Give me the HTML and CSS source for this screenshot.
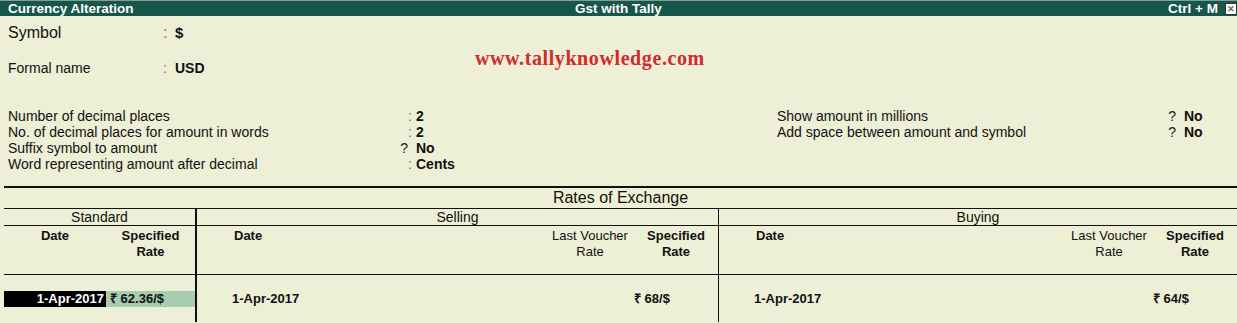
FILE: index.html
```html
<!DOCTYPE html>
<html lang="en">
<head>
  <meta charset="UTF-8" />
  <title>Currency Alteration</title>
  <link rel="stylesheet" href="styles.css">
</head>
<body>
  <!-- Title bar -->
  <div class="titlebar">
    <div class="title-left">Currency Alteration</div>
    <div class="title-center">Gst with Tally</div>
    <div class="title-right">
      <span>Ctrl + M</span>
      <span class="close-btn">&#x2715;</span>
    </div>
  </div>

  <!-- Currency details -->
  <div class="form">
    <div class="field field-big">
      <div class="field-label">Symbol</div>
      <div class="field-mark">:</div>
      <div class="field-value">$</div>
    </div>
    <div class="watermark-row">
      <div class="field">
        <div class="field-label">Formal name</div>
        <div class="field-mark">:</div>
        <div class="field-value">USD</div>
      </div>
      <div class="watermark">www.tallyknowledge.com</div>
    </div>

    <div class="options">
      <div class="options-col">
        <div class="opt">
          <div class="opt-label">Number of decimal places</div>
          <div class="opt-mark">:</div>
          <div class="opt-value">2</div>
        </div>
        <div class="opt">
          <div class="opt-label">No. of decimal places for amount in words</div>
          <div class="opt-mark">:</div>
          <div class="opt-value">2</div>
        </div>
        <div class="opt">
          <div class="opt-label">Suffix symbol to amount</div>
          <div class="opt-mark q">?</div>
          <div class="opt-value">No</div>
        </div>
        <div class="opt">
          <div class="opt-label">Word representing amount after decimal</div>
          <div class="opt-mark">:</div>
          <div class="opt-value">Cents</div>
        </div>
      </div>
      <div class="options-col right">
        <div class="opt">
          <div class="opt-label">Show amount in millions</div>
          <div class="opt-mark q">?</div>
          <div class="opt-value">No</div>
        </div>
        <div class="opt">
          <div class="opt-label">Add space between amount and symbol</div>
          <div class="opt-mark q">?</div>
          <div class="opt-value">No</div>
        </div>
      </div>
    </div>
  </div>

  <!-- Rates of exchange -->
  <div class="rates">
    <div class="rates-title">Rates of Exchange</div>
    <div class="rates-body">
      <div class="block standard">
        <div class="group">Standard</div>
        <div class="cols">
          <div class="col c-date center">Date</div>
          <div class="col c-rate center">Specified<br>Rate</div>
        </div>
        <div class="data">
          <div class="cell c-date sel-date">1-Apr-2017</div>
          <div class="cell c-rate sel-rate">&#8377; 62.36/$</div>
        </div>
      </div>

      <div class="block selling">
        <div class="group">Selling</div>
        <div class="cols">
          <div class="col c-wide left">Date</div>
          <div class="col c-lvr center light">Last Voucher<br>Rate</div>
          <div class="col c-spec center">Specified<br>Rate</div>
        </div>
        <div class="data">
          <div class="cell c-wide left-data">1-Apr-2017</div>
          <div class="cell c-lvr"></div>
          <div class="cell c-spec">&#8377; 68/$</div>
        </div>
      </div>

      <div class="block buying">
        <div class="group">Buying</div>
        <div class="cols">
          <div class="col c-wide left">Date</div>
          <div class="col c-lvr center light">Last Voucher<br>Rate</div>
          <div class="col c-spec center">Specified<br>Rate</div>
        </div>
        <div class="data">
          <div class="cell c-wide left-data">1-Apr-2017</div>
          <div class="cell c-lvr"></div>
          <div class="cell c-spec">&#8377; 64/$</div>
        </div>
      </div>
    </div>
  </div>
</body>
</html>
```

FILE: styles.css
```css
* {
  margin: 0;
  padding: 0;
  box-sizing: border-box;
}
body {
  width: 1237px;
  height: 323px;
  overflow: hidden;
  background-color: #edefd6;
  font-family: 'Liberation Sans', Arial, sans-serif;
  font-size: 14px;
  color: #111;
}
/* Title bar */
.titlebar {
  height: 16px;
  background-color: #17564a;
  border-top: 1px solid #8a9a94;
  color: #fff;
  font-weight: bold;
  font-size: 13.5px;
  line-height: 15px;
  display: flex;
  align-items: center;
  position: relative;
}
.title-left {
  padding-left: 8px;
  flex: 1;
}
.title-center {
  position: absolute;
  left: 0;
  right: 0;
  text-align: center;
  pointer-events: none;
}
.title-right {
  display: flex;
  align-items: center;
  gap: 7px;
}
.close-btn {
  width: 12px;
  height: 12px;
  background-color: #fff;
  border: 1px solid #333;
  color: #666;
  font-size: 9px;
  line-height: 10px;
  text-align: center;
}
/* Form fields */
.form {
  padding: 8px 0 0 8px;
}
.field {
  display: flex;
  align-items: baseline;
  height: 18px;
}
.field-big {
  font-size: 16px;
  height: 20px;
}
.field-big .field-value {
  font-size: 15px;
}
.field-label {
  width: 155px;
}
.field-mark {
  width: 12px;
  color: #777;
}
.field-value {
  font-weight: bold;
}
.watermark-row {
  display: flex;
  align-items: flex-end;
  margin-top: 4px;
  height: 30px;
}
.watermark-row .field {
  width: 467px;
}
.watermark {
  margin-bottom: 8px;
  font-family: 'Liberation Serif', 'Times New Roman', serif;
  font-weight: bold;
  font-size: 20px;
  letter-spacing: 0.6px;
  color: #d12b2b;
}
.options {
  display: flex;
  margin-top: 30px;
}
.options-col {
  width: 769px;
  flex-shrink: 0;
}
.options-col.right {
  flex: 1;
}
.opt {
  display: flex;
  height: 16px;
  line-height: 16px;
}
.opt-label {
  width: 392px;
}
.opt-mark {
  width: 16px;
  color: #777;
  text-align: right;
  padding-right: 4px;
}
.opt-mark.q {
  color: #222;
  padding-right: 8px;
}
.opt-value {
  font-weight: bold;
}
.options-col.right .opt-label {
  width: 391px;
}
/* Rates of Exchange */
.rates {
  margin: 14px 0 0 4px;
  border-top: 2px solid #111;
  font-size: 13px;
}
.rates-title {
  height: 21px;
  line-height: 20px;
  text-align: center;
  font-size: 16px;
  border-bottom: 1px solid #111;
}
.rates-body {
  display: flex;
}
.block {
  display: flex;
  flex-direction: column;
}
.standard {
  width: 191px;
}
.selling {
  width: 523px;
  border-left: 2px solid #111;
}
.buying {
  flex: 1;
  border-left: 1px solid #111;
}
.group {
  height: 17px;
  line-height: 16px;
  text-align: center;
  font-size: 14px;
  border-bottom: 1px solid #111;
}
.cols {
  display: flex;
  height: 49px;
  padding-top: 2px;
  border-bottom: 1px solid #111;
  line-height: 16px;
}
.col {
  font-weight: bold;
}
.col.light {
  font-weight: normal;
}
.center {
  text-align: center;
}
.c-date {
  width: 102px;
}
.c-rate {
  width: 89px;
}
.c-wide {
  flex: 1;
}
.left {
  padding-left: 37px;
}
.left-data {
  padding-left: 35px;
}
.c-lvr {
  width: 84px;
}
.c-spec {
  width: 86px;
  padding-left: 2px;
}
.data {
  display: flex;
  padding-top: 16px;
  height: 47px;
}
.cell {
  height: 16px;
  line-height: 16px;
  font-weight: bold;
}
.sel-date {
  background-color: #000;
  color: #fff;
  text-align: right;
  padding-right: 2px;
}
.sel-rate {
  background-color: #a8ccaf;
  padding-left: 4px;
}
```
